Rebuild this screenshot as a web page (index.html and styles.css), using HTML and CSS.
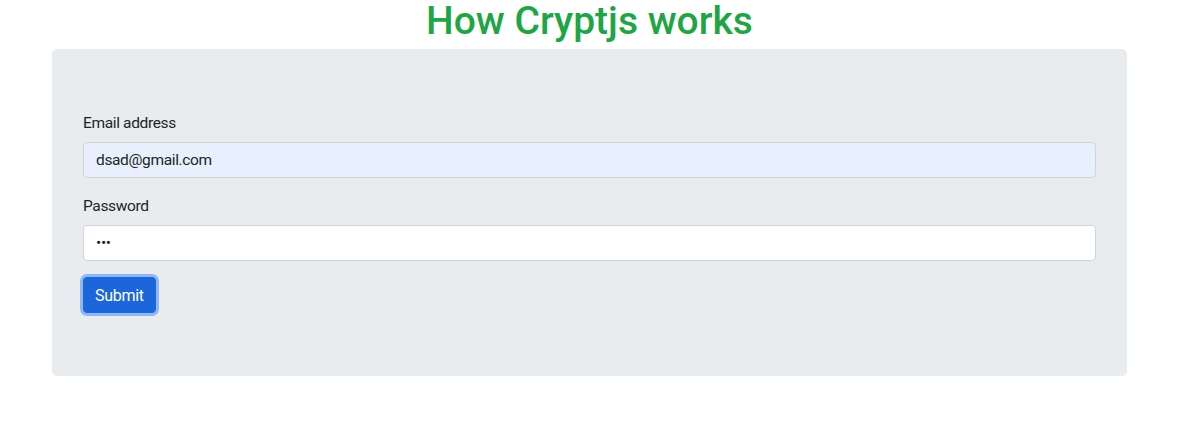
FILE: index.html
```html
<!DOCTYPE html>
<html lang="en">
<head>
  <meta charset="utf-8">
  <title>How Cryptjs works</title>
  <link rel="stylesheet" href="styles.css">
</head>
<body>
  <div class="page">
    <h1 class="title">How Cryptjs works</h1>

    <div class="jumbo">
      <form class="login">
        <div class="field">
          <label class="label" for="email">Email address</label>
          <input class="input autofill" id="email" type="email" value="dsad@gmail.com">
        </div>
        <div class="field">
          <label class="label" for="pass">Password</label>
          <input class="input" id="pass" type="password" value="abc">
        </div>
        <button class="submit" type="button">Submit</button>
      </form>
    </div>
  </div>
</body>
</html>
```

FILE: styles.css
```css
body {
  margin: 0;
  font-family: Roboto, "Liberation Sans", sans-serif;
  color: #212529;
  background: #fff;
}

.page {
  width: 1179px;
}

.title {
  margin: 0 0 7px;
  text-align: center;
  color: #1fa546;
  font-size: 39px;
  font-weight: 500;
  line-height: 42px;
}

.jumbo {
  margin: 0 52px;
  padding: 62px 31px 63px;
  background-color: #e9ecef;
  border-radius: 5px;
}

.field {
  margin-bottom: 16px;
}

.label {
  display: block;
  margin-bottom: 7px;
  font-size: 15.5px;
  letter-spacing: -0.35px;
  line-height: 24px;
}

.input {
  display: block;
  box-sizing: border-box;
  width: 100%;
  height: 36px;
  padding: 6px 12px;
  font-family: inherit;
  font-size: 15.5px;
  letter-spacing: -0.35px;
  color: #212529;
  background-color: #fff;
  border: 1px solid #ced4da;
  border-radius: 4px;
}

.autofill {
  background-color: #e8f0fe;
}

.submit {
  display: block;
  margin: 0;
  height: 36px;
  padding: 0 11px;
  font-family: inherit;
  font-size: 16px;
  letter-spacing: -0.3px;
  color: #fff;
  background-color: #1c66d9;
  border: 1px solid #1c66d9;
  border-radius: 4px;
  box-shadow: 0 0 0 3px #8db8f5;
}
```
